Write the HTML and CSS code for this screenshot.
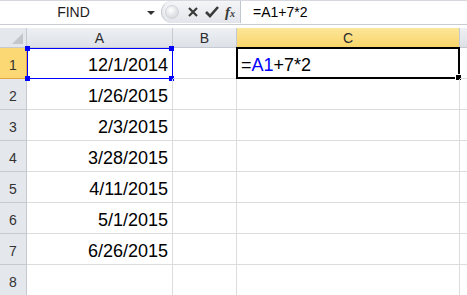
FILE: index.html
```html
<!DOCTYPE html>
<html lang="en">
<head>
    <meta charset="UTF-8">
    <title>FIND</title>
    <link rel="stylesheet" href="styles.css">
</head>
<body>
    <div class="formula-bar">
        <div class="name-box">
            <span class="name">FIND</span>
            <span class="drop"></span>
        </div>
        <div class="tools">
            <span class="grip"></span>
            <svg class="icon" width="14" height="14" viewBox="0 0 14 14">
                <path d="M3 3 L11 11 M11 3 L3 11" stroke="#3a3a3a" stroke-width="2.2" fill="none"/>
            </svg>
            <svg class="icon" width="16" height="14" viewBox="0 0 16 14">
                <path d="M2 7 L6 11 L14 2" stroke="#3a3a3a" stroke-width="2.6" fill="none"/>
            </svg>
            <span class="fx">f<sub>x</sub></span>
        </div>
        <div class="formula">=A1+7*2</div>
    </div>
    <div class="spacer"></div>

    <div class="sheet">
        <div class="corner"><span class="tri"></span></div>
        <div class="col-head">A</div>
        <div class="col-head">B</div>
        <div class="col-head active">C</div>
        <div class="col-head tail"></div>

        <div class="row-head active">1</div>
        <div class="cell date ref">12/1/2014
            <span class="dot tl"></span><span class="dot tr"></span>
            <span class="dot bl"></span><span class="dot br"></span>
        </div>
        <div class="cell"></div>
        <div class="cell edit">=<span class="ref-text">A1</span>+7*2<span class="fill"></span></div>
        <div class="cell tail"></div>

        <div class="row-head">2</div>
        <div class="cell date">1/26/2015</div>
        <div class="cell"></div>
        <div class="cell"></div>
        <div class="cell tail"></div>

        <div class="row-head">3</div>
        <div class="cell date">2/3/2015</div>
        <div class="cell"></div>
        <div class="cell"></div>
        <div class="cell tail"></div>

        <div class="row-head">4</div>
        <div class="cell date">3/28/2015</div>
        <div class="cell"></div>
        <div class="cell"></div>
        <div class="cell tail"></div>

        <div class="row-head">5</div>
        <div class="cell date">4/11/2015</div>
        <div class="cell"></div>
        <div class="cell"></div>
        <div class="cell tail"></div>

        <div class="row-head">6</div>
        <div class="cell date">5/1/2015</div>
        <div class="cell"></div>
        <div class="cell"></div>
        <div class="cell tail"></div>

        <div class="row-head">7</div>
        <div class="cell date">6/26/2015</div>
        <div class="cell"></div>
        <div class="cell"></div>
        <div class="cell tail"></div>

        <div class="row-head">8</div>
        <div class="cell"></div>
        <div class="cell"></div>
        <div class="cell"></div>
        <div class="cell tail"></div>
    </div>
</body>
</html>
```

FILE: styles.css
```css
body {
    margin: 0;
    width: 467px;
    height: 295px;
    overflow: hidden;
    background-color: #ffffff;
    font-family: "Liberation Sans", Arial, sans-serif;
    color: #000000;
}

/* Formula bar */
.formula-bar {
    display: flex;
    height: 23px;
    border-top: 1px solid #d5d9df;
    box-sizing: border-box;
}

.name-box {
    width: 161px;
    flex-shrink: 0;
    display: flex;
    align-items: center;
    background-color: #ffffff;
}

.name {
    flex: 1;
    text-align: center;
    font-size: 14px;
    color: #1e1e1e;
}

.drop {
    width: 0;
    height: 0;
    border-left: 4px solid transparent;
    border-right: 4px solid transparent;
    border-top: 4px solid #333;
    margin-right: 6px;
    margin-top: 2px;
}

.tools {
    width: 79px;
    flex-shrink: 0;
    display: flex;
    align-items: center;
    gap: 4px;
    background: linear-gradient(#f4f5f7, #e2e5ea);
    border-left: 1px solid #c2c7ce;
    border-radius: 11px 0 0 11px;
    box-sizing: border-box;
    padding-left: 3px;
}

.tools > * {
    flex-shrink: 0;
}

.grip {
    width: 12px;
    height: 12px;
    border-radius: 50%;
    background: radial-gradient(circle at 40% 35%, #ffffff, #c9ccd1);
    border: 1px solid #d2d5da;
    margin-right: 3px;
}

.icon {
    display: block;
}

.fx {
    font-family: "Liberation Serif", "Times New Roman", serif;
    font-style: italic;
    font-weight: bold;
    font-size: 15px;
    color: #3a3a3a;
    margin-left: 1px;
}

.fx sub {
    font-size: 10px;
    vertical-align: 0;
}

.formula {
    flex: 1;
    border-left: 1px solid #c2c7ce;
    padding-left: 12px;
    font-size: 14px;
    line-height: 22px;
    background-color: #ffffff;
}

.spacer {
    height: 4px;
    border-top: 1px solid #c9cdd3;
    margin-top: 1px;
    box-sizing: border-box;
}

/* Sheet grid */
.sheet {
    display: grid;
    grid-template-columns: 27px 146px 64px 223px 7px;
    grid-template-rows: 20px repeat(8, 31px);
}

.corner {
    background: #e4e7ec;
    border-right: 1px solid #c5cad1;
    border-bottom: 1px solid #c5cad1;
    box-sizing: border-box;
    position: relative;
}

.tri {
    position: absolute;
    right: 3px;
    bottom: 3px;
    width: 0;
    height: 0;
    border-left: 11px solid transparent;
    border-bottom: 11px solid #c3c7cc;
}

.col-head {
    background: linear-gradient(#eef0f3, #dde1e7);
    border-right: 1px solid #c5cad1;
    border-bottom: 1px solid #c5cad1;
    box-sizing: border-box;
    text-align: center;
    font-size: 14px;
    line-height: 20px;
    color: #2d2d2d;
}

.col-head.active {
    background: linear-gradient(#fce69a, #f9d66a);
    border-bottom: 1px solid #f0b43c;
}

.col-head.tail {
    border-right: none;
}

.row-head {
    background-color: #e4e7ec;
    border-right: 1px solid #c5cad1;
    border-bottom: 1px solid #c5cad1;
    box-sizing: border-box;
    text-align: center;
    font-size: 14px;
    line-height: 30px;
    padding-top: 2px;
    color: #333333;
}

.row-head.active {
    background-color: #fcd874;
    border-right: 1px solid #e4a547;
    border-bottom: 1px solid #e4a547;
}

.cell {
    border-right: 1px solid #dadcdd;
    border-bottom: 1px solid #dadcdd;
    box-sizing: border-box;
    font-size: 18px;
    line-height: 30px;
    padding-top: 2px;
    position: relative;
}

.cell.tail {
    border-right: none;
}

.date {
    text-align: right;
    padding-right: 4px;
}

/* A1 reference highlight */
.ref {
    outline: 1px solid #0000ff;
    outline-offset: -1px;
}

.dot {
    position: absolute;
    width: 5px;
    height: 5px;
    background-color: #0000ff;
}

.dot.tl { left: -2px; top: -2px; }
.dot.tr { right: -2px; top: -2px; }
.dot.bl { left: -2px; bottom: -3px; }
.dot.br { right: -2px; bottom: -3px; }

/* C1 being edited */
.edit {
    border: 2px solid #000000;
    margin-left: -1px;
    margin-top: -1px;
    padding-left: 3px;
    padding-top: 1px;
}

.ref-text {
    color: #0000ff;
}

.fill {
    position: absolute;
    right: -4px;
    bottom: -4px;
    width: 5px;
    height: 5px;
    background-color: #000000;
    border: 1px solid #ffffff;
}
```
